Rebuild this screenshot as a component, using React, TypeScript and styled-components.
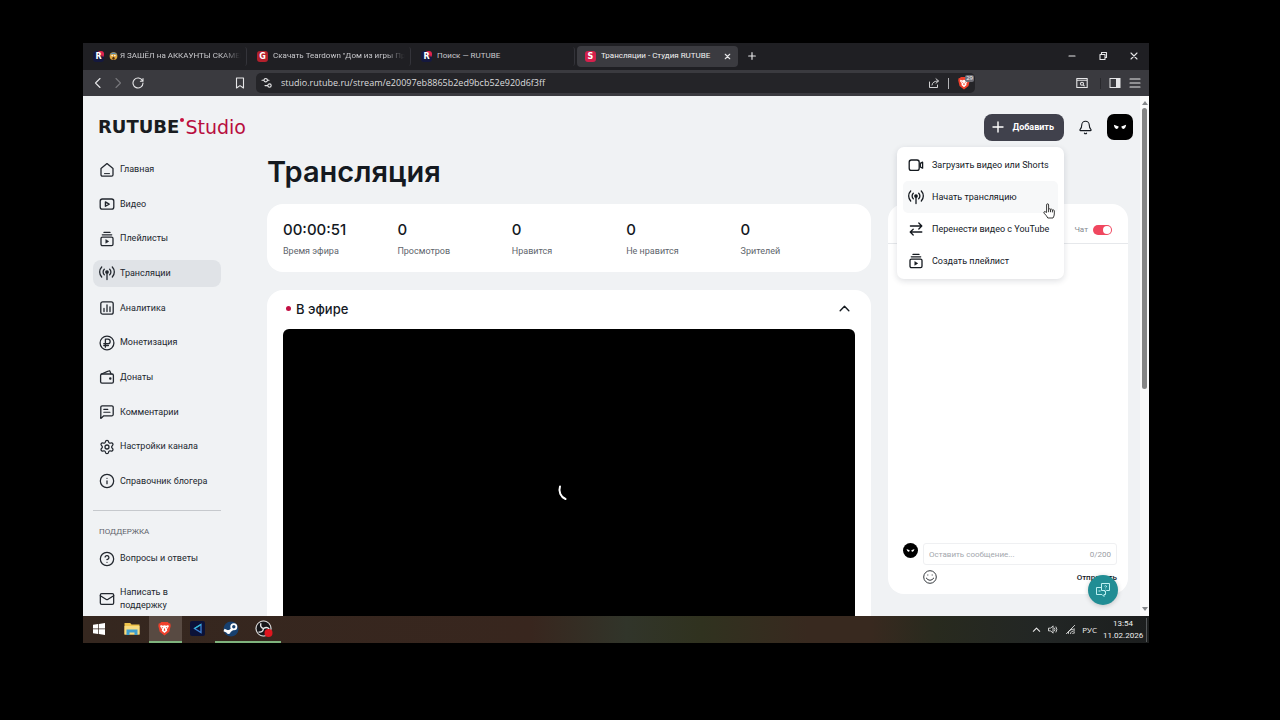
import React from "react";
import styled, { createGlobalStyle } from "styled-components";
import { Bell, Info, CircleHelp, Mail, Settings } from "lucide-react";

const Global = createGlobalStyle`
  *, *::before, *::after { box-sizing: border-box; }
  body { margin: 0; background: #000; }
  button, input { font: inherit; color: inherit; }
  button { border: 0; padding: 0; background: none; cursor: pointer; }
  h1, h2, p, dl, dd, ul { margin: 0; padding: 0; }
  svg { display: block; flex: none; }
`;

const uiFont = `"Open Sans", "Noto Sans", sans-serif`;
const bodyFont = `Roboto, "Liberation Sans", sans-serif`;
const wideFont = `Inter, "Liberation Sans", sans-serif`;

const Screen = styled.div`
  display: flex;
  height: 100vh;
  min-height: 480px;
  padding: 43px 131px 77px 83px;
  background: #000;
`;

const Desktop = styled.div`
  flex: 1;
  min-width: 0;
  display: grid;
  grid-template-rows: 27px 26px minmax(0, 1fr) 27px;
  overflow: hidden;
  font-family: ${uiFont};
`;

/* Browser chrome */
const TabStrip = styled.div`
  display: flex;
  align-items: center;
  gap: 3px;
  padding: 0 0 1px 2px;
  background: #1f1f23;
  color: #c9c9cc;
`;

const Tab = styled.div<{ $active?: boolean }>`
  display: flex;
  align-items: center;
  gap: 5px;
  flex: 0 1 161px;
  min-width: 0;
  height: 21px;
  padding: 0 5px 0 8px;
  border-radius: 4px;
  background: ${(p) => (p.$active ? "#3b3b40" : "transparent")};
  color: ${(p) => (p.$active ? "#f2f2f2" : "#c9c9cd")};
  box-shadow: ${(p) => (p.$active ? "none" : "2px 0 0 -1px #34343a")};
`;

const TabTitle = styled.span<{ $fade?: boolean }>`
  flex: 1;
  min-width: 0;
  display: flex;
  align-items: center;
  gap: 2px;
  overflow: hidden;
  white-space: nowrap;
  font-family: ${bodyFont};
  font-size: 8px;
  line-height: 14px;
  mask-image: ${(p) => (p.$fade ? "linear-gradient(90deg, #000 85%, transparent)" : "none")};
`;

const Favicon = styled.span<{ $bg: string }>`
  flex: none;
  width: 11px;
  height: 11px;
  border-radius: 3px;
  background: ${(p) => p.$bg};
  color: #fff;
  font: 700 8px/11px "DejaVu Sans", sans-serif;
  text-align: center;
`;

const ChromeButton = styled.button<{ $dim?: boolean }>`
  display: grid;
  place-items: center;
  min-width: 12px;
  height: 20px;
  color: ${(p) => (p.$dim ? "#77777c" : "#e6e6e8")};
`;

const NewTab = styled(ChromeButton)`
  width: 22px;
`;

const WindowButtons = styled.div`
  display: flex;
  gap: 19px;
  margin-left: auto;
  padding-right: 9px;
`;

const Toolbar = styled.div`
  display: grid;
  grid-template-columns: 154px minmax(0, 1fr) 156px;
  align-items: center;
  gap: 10px;
  padding: 0 8px 0 9px;
  background: #3a3a3f;
  color: #e6e6e8;
`;

const ToolGroup = styled.div<{ $end?: boolean }>`
  display: flex;
  align-items: center;
  gap: 8px;
  justify-content: ${(p) => (p.$end ? "flex-end" : "flex-start")};

  & > :first-child {
    margin-right: ${(p) => (p.$end ? "4px" : "0")};
  }

  & > :last-child {
    margin-left: ${(p) => (p.$end ? "0" : "auto")};
  }
`;

const Address = styled.label`
  display: flex;
  align-items: center;
  gap: 8px;
  height: 20px;
  padding: 0 4px 0 5px;
  border-radius: 5px;
  background: #242428;
`;

const AddressInput = styled.input`
  flex: 1;
  min-width: 0;
  padding: 0;
  border: 0;
  outline: 0;
  background: transparent;
  color: #dcdcde;
  font-size: 9px;
  line-height: 14px;
`;

const Divider = styled.span<{ $dim?: boolean }>`
  width: 1px;
  height: 11px;
  background: ${(p) => (p.$dim ? "#29292d" : "#b5b5b8")};
`;

/* Page */
const Viewport = styled.div`
  display: grid;
  grid-template-columns: minmax(0, 1fr) 9px;
  min-height: 0;
  background: #f0f2f4;
  color: #14191f;
  font-family: ${bodyFont};
`;

const Scrollbar = styled.div`
  display: flex;
  flex-direction: column;
  align-items: center;
  justify-content: space-between;
  padding: 5px 0;
  background: #fafafa;
  color: #85878a;
`;

const Thumb = styled.span`
  width: 5px;
  flex: 0 0 55%;
  margin: 3px 0 auto;
  border-radius: 3px;
  background: #858585;
`;

const Page = styled.div`
  position: relative;
  display: grid;
  grid-template: 60px minmax(0, 1fr) / 184px minmax(0, 1fr);
  min-height: 0;
`;

const Header = styled.header`
  grid-column: 1 / -1;
  display: flex;
  align-items: center;
  justify-content: space-between;
  padding: 2px 7px 0 15px;
`;

const Logo = styled.a`
  display: flex;
  align-items: center;
  color: #191c20;
  font: 700 18px/20px "DejaVu Sans", sans-serif;
  text-decoration: none;
`;

const LogoDot = styled.span`
  width: 4px;
  height: 4px;
  margin: 0 1px 14px;
  border-radius: 50%;
  background: #c8103f;
`;

const LogoSub = styled.span`
  color: #b80e3e;
  font-size: 19px;
  font-weight: 400;
`;

const HeaderActions = styled.div`
  display: flex;
  align-items: center;
  gap: 14px;
`;

const MenuAnchor = styled.div`
  position: relative;
`;

const AddButton = styled.button`
  display: flex;
  align-items: center;
  gap: 8px;
  height: 27px;
  padding: 0 10px 0 8px;
  border-radius: 8px;
  background: #40414c;
  color: #fff;
  font-size: 9px;
  font-weight: 700;
`;

const Menu = styled.ul`
  position: absolute;
  z-index: 2;
  top: 33px;
  right: 0;
  width: 167px;
  padding: 2px 6px;
  border-radius: 7px;
  background: #fff;
  box-shadow: 0 2px 6px rgba(20, 30, 50, 0.14);
  list-style: none;
`;

const MenuItem = styled.button<{ $hover?: boolean }>`
  position: relative;
  display: flex;
  align-items: center;
  gap: 8px;
  width: 100%;
  height: 32px;
  padding: 0 5px;
  border-radius: 5px;
  background: ${(p) => (p.$hover ? "#f7f8f9" : "transparent")};
  font-size: 9px;
  white-space: nowrap;
`;

const Pointer = styled.svg`
  position: absolute;
  right: 3px;
  bottom: -6px;
`;

const IconButton = styled.button`
  display: grid;
  place-items: center;
`;

const Avatar = styled.span<{ $small?: boolean }>`
  display: grid;
  place-items: center;
  flex: none;
  width: ${(p) => (p.$small ? 15 : 26)}px;
  height: ${(p) => (p.$small ? 15 : 26)}px;
  border-radius: ${(p) => (p.$small ? "50%" : "7px")};
  background: #000;
`;

const Sidebar = styled.nav`
  padding: 0 46px 0 10px;
  overflow: hidden;
`;

const NavList = styled.ul`
  display: flex;
  flex-direction: column;
  justify-content: space-between;
  height: 339px;
  list-style: none;
`;

const NavLink = styled.a<{ $active?: boolean }>`
  display: flex;
  align-items: center;
  gap: 5px;
  min-height: 27px;
  padding: 0 6px;
  border-radius: 8px;
  background: ${(p) => (p.$active ? "#e0e3e7" : "transparent")};
  color: #22272e;
  font-size: 9px;
  line-height: 13px;
  text-decoration: none;
`;

const NavText = styled.span<{ $narrow?: boolean }>`
  max-width: ${(p) => (p.$narrow ? "60px" : "none")};
`;

const Support = styled.div`
  display: flex;
  flex-direction: column;
  gap: 13px;
  margin-top: 15px;
  border-top: 1px solid #c6c9cd;
`;

const SupportTitle = styled.h2`
  padding: 15px 6px 0;
  margin-bottom: -6px;
  color: #5d636b;
  font-size: 8px;
  font-weight: 400;
  line-height: 12px;
`;

const Content = styled.div`
  display: grid;
  grid-template-columns: minmax(0, 1fr) 240px;
  gap: 17px;
  min-height: 0;
  padding-right: 12px;
`;

const Main = styled.main`
  min-width: 0;
  overflow: hidden;
`;

const Title = styled.h1`
  height: 48px;
  font: 600 29px/32px ${wideFont};
`;

const Card = styled.section`
  margin-bottom: 18px;
  padding: 0 16px;
  border-radius: 16px;
  background: #fff;
`;

const Stats = styled.dl`
  display: grid;
  grid-template-columns: repeat(5, 1fr);
  padding: 16px 0 14px;
`;

const Stat = styled.div`
  display: flex;
  flex-direction: column-reverse;
  gap: 4px;
`;

const StatLabel = styled.dt`
  color: #60656c;
  font-size: 9px;
  line-height: 14px;
`;

const StatValue = styled.dd`
  font: 500 15px/20px ${wideFont};
`;

const LiveHeader = styled.div`
  display: flex;
  align-items: center;
  gap: 5px;
  height: 39px;
  padding: 0 4px 2px 3px;
`;

const LiveDot = styled.span`
  width: 5px;
  height: 5px;
  border-radius: 50%;
  background: #c20f43;
`;

const LiveTitle = styled.h2`
  flex: 1;
  font: 500 13px/18px ${wideFont};
`;

const Player = styled.div`
  display: grid;
  place-items: center;
  aspect-ratio: 16 / 9;
  border-radius: 6px;
  background: #000;
`;

const Chat = styled.aside`
  position: relative;
  display: flex;
  flex-direction: column;
  margin: 48px 0 22px;
  border-radius: 16px;
  background: #fff;
`;

const ChatHeader = styled.label`
  display: flex;
  align-items: center;
  justify-content: flex-end;
  gap: 5px;
  height: 40px;
  padding: 12px 16px 0;
  border-bottom: 1px solid #e6e8eb;
  color: #85898f;
  font-size: 8px;
`;

const Switch = styled.input`
  appearance: none;
  display: flex;
  justify-content: flex-end;
  width: 19px;
  height: 10px;
  margin: 0;
  padding: 1px;
  border-radius: 5px;
  background: #f0475f;

  &::before {
    content: "";
    width: 8px;
    height: 8px;
    border-radius: 50%;
    background: #fff;
  }
`;

const Composer = styled.form`
  display: grid;
  grid-template-columns: 15px minmax(0, 1fr);
  gap: 4px 5px;
  margin-top: auto;
  padding: 0 11px 9px 15px;
`;

const MessageBox = styled.label`
  display: flex;
  align-items: center;
  height: 22px;
  padding: 0 5px;
  border: 1px solid #eff0f2;
  border-radius: 3px;
  color: #9a9ea4;
  font-size: 8px;
`;

const MessageInput = styled.input`
  flex: 1;
  min-width: 0;
  padding: 0;
  border: 0;
  outline: 0;
  background: none;
  font-size: 8px;

  &::placeholder {
    color: #a3a7ad;
  }
`;

const ComposerActions = styled.div`
  grid-column: 2;
  display: flex;
  align-items: center;
  justify-content: space-between;
  height: 16px;
`;

const SendButton = styled.button`
  font-size: 8px;
  font-weight: 500;
`;

const HelpBubble = styled.button`
  position: absolute;
  right: 10px;
  bottom: -11px;
  display: grid;
  place-items: center;
  width: 30px;
  height: 30px;
  border-radius: 50%;
  background: #218d94;
  color: #bdf0f2;
  box-shadow: 0 1px 5px rgba(0, 0, 0, 0.2);
`;

/* Taskbar */
const Taskbar = styled.div`
  display: flex;
  justify-content: space-between;
  background: linear-gradient(90deg, #35271f 0%, #38261e 42%, #31352a 51%, #30321f 58%, #38291f 68%, #38291f 74%, #282a1e 80%, #222625 90%, #1c1e1e 100%);
  color: #f0f0f0;
`;

const TaskGroup = styled.div`
  display: flex;
  align-items: center;
`;

const TaskButton = styled.button<{ $running?: boolean; $active?: boolean }>`
  display: grid;
  place-items: center;
  width: 33px;
  height: 27px;
  padding-right: 2px;
  background: ${(p) => (p.$active ? "#584a42" : "transparent")};
  background-clip: padding-box;
  border-bottom: 2px solid ${(p) => (p.$running ? "#7fb37d" : "transparent")};
`;

const Tray = styled(TaskGroup)`
  gap: 6px;
  padding-right: 2px;
  font-size: 8px;
`;

const Clock = styled.time`
  width: 44px;
  padding-right: 3px;
  border-right: 1px solid #55585a;
  line-height: 12px;
  text-align: center;
  font-family: ${bodyFont};
  white-space: nowrap;
`;

const shapes: Record<string, React.ReactNode> = {
  home: <><path d="M2 6.4 8 1.6l6 4.8v6.4A1.4 1.4 0 0 1 12.600 14.200H3.400A1.4 1.4 0 0 1 2 12.800Z" /><path d="M5.500 11.600h5" strokeWidth="1" /></>,
  video: <><rect x="1.200" y="3" width="13.600" height="10.200" rx="2.200" /><path d="m6.400 5.900 3.800 2.200-3.800 2.200Z" /></>,
  playlist: <><path d="M5 1.400h6M3.300 3.800h9.400" /><rect x="2" y="6.200" width="12" height="8.400" rx="1.400" /><path d="m7 8.800 2.700 1.600L7 12Z" fill="currentColor" strokeWidth=".6" /></>,
  live: <><circle cx="8" cy="7" r="1.200" fill="currentColor" /><path d="M8 8v6.600M5.300 9.800a3.900 3.900 0 0 1 0-5.600M10.700 9.800a3.900 3.900 0 0 0 0-5.600M2.700 12a7.200 7.200 0 0 1 0-10M13.300 12a7.200 7.200 0 0 0 0-10" /></>,
  chart: <><rect x="1.800" y="1.800" width="12.400" height="12.400" rx="2" /><path d="M5 8.500v3M8 4.800v6.700M11 6.800v4.700" /></>,
  ruble: <><circle cx="8" cy="8" r="6.900" /><path d="M6.400 12.200V4.200h2.500a2.200 2.200 0 0 1 0 4.500H4.800M4.800 10.500h4.600" /></>,
  wallet: <><rect x="1.600" y="5" width="12.800" height="9.200" rx="1.400" /><path d="M2.500 5 9.700 1.900a1 1 0 0 1 1.400.6L12 5" /><circle cx="11.300" cy="9.600" r=".6" fill="currentColor" /></>,
  comment: <><path d="M1.800 14.400V3.200A1.4 1.400 0 0 1 3.200 1.800h9.600a1.400 1.400 0 0 1 1.400 1.400v7.200a1.400 1.400 0 0 1-1.400 1.400H4.800Z" /><path d="M4.800 5.400h4M4.800 8.200h6.200" strokeWidth="1.100" /></>,
  camera: <><rect x="1.200" y="3" width="10" height="10.400" rx="2.200" /><path d="M12.300 6.400 14.600 5.200v6l-2.300-1.200Z" /></>,
  swap: <path d="M2.400 5h11.400M10.800 2l3 3-3 3M13.800 11H2.400M5.200 8.200 2.200 11l3 3" />,
};

function Glyph({ name }: { name: string }) {
  return (
    <svg width="16" height="16" viewBox="0 0 16 16" fill="none" stroke="currentColor" strokeWidth="1.3" strokeLinecap="round" strokeLinejoin="round" aria-hidden="true">
      {shapes[name]}
    </svg>
  );
}

const nav = [
  ["Главная", "home"],
  ["Видео", "video"],
  ["Плейлисты", "playlist"],
  ["Трансляции", "live"],
  ["Аналитика", "chart"],
  ["Монетизация", "ruble"],
  ["Донаты", "wallet"],
  ["Комментарии", "comment"],
  ["Настройки канала", "gear"],
  ["Справочник блогера", "info"],
];

const stats = [
  ["00:00:51", "Время эфира"],
  ["0", "Просмотров"],
  ["0", "Нравится"],
  ["0", "Не нравится"],
  ["0", "Зрителей"],
];

const menu = [
  ["Загрузить видео или Shorts", "camera"],
  ["Начать трансляцию", "live"],
  ["Перенести видео с YouTube", "swap"],
  ["Создать плейлист", "playlist"],
];

function navIcon(name: string) {
  if (name === "gear") return <Settings size={16} strokeWidth={1.9} />;
  if (name === "info") return <Info size={16} strokeWidth={1.9} />;
  return <Glyph name={name} />;
}

function Face({ size }: { size: number }) {
  return (
    <svg width={size} height={size} viewBox="0 0 16 16" fill="#fff" aria-hidden="true">
      <path d="M1 5.500 6.500 7.500Q6.300 10.300 4 10.200 1.700 9.800 1 5.500ZM15 5.500 9.500 7.500Q9.700 10.300 12 10.200 14.300 9.800 15 5.500Z" />
    </svg>
  );
}

function Lion({ size }: { size: number }) {
  return (
    <svg width={size} height={size} viewBox="0 0 16 16" aria-hidden="true">
      <path d="M4.500 1h7l1.200 1.400 1.500.2.400 2.600-1.500 6.300L8 15.400l-5.100-3.900L1.400 5.200l.4-2.600 1.500-.2Z" fill="#f0402c" />
      <path d="M4 4.200 6.200 5 8 4.400 9.800 5 12 4.200l.6 1.600-2 3 .3 1.500L8 12.800l-2.900-2.500.3-1.500-2-3Z" fill="#fff" />
      <path d="m4.600 6.200 2 .6-.4 1.300ZM11.400 6.200l-2 .6.400 1.300ZM8 7.200l.9 2.600L8 10.600l-.9-.8Z" fill="#f0402c" />
    </svg>
  );
}

const ShieldWrap = styled.span`
  position: relative;
  display: block;
`;

const ShieldCount = styled.span`
  position: absolute;
  top: -1px;
  right: -3px;
  padding: 0 1px;
  border-radius: 2px;
  background: #6d6d75;
  color: #fff;
  font-size: 6px;
  line-height: 7px;
`;

function Line({ d, size = 12, width = 1.1 }: { d: string; size?: number; width?: number }) {
  return (
    <svg width={size} height={size} viewBox="0 0 12 12" fill="none" stroke="currentColor" strokeWidth={width} strokeLinecap="round" strokeLinejoin="round" aria-hidden="true">
      <path d={d} />
    </svg>
  );
}

const rutubeIcon = "radial-gradient(circle at 90% 10%, #e0234e 0 22%, #14183f 38%)";

function BrowserChrome() {
  return (
    <>
      <TabStrip>
        <Tab>
          <Favicon $bg={rutubeIcon}>R</Favicon>
          <TabTitle $fade>
            <svg width="9" height="9" viewBox="0 0 10 10" aria-hidden="true">
              <circle cx="5" cy="4.500" r="4.300" fill="#e0a63a" />
              <path d="M.8 3.200Q5-2 9.200 3.200Q5 1.500.8 3.200Z" fill="#4b86b8" />
              <circle cx="3.500" cy="4" r=".9" fill="#fff" /><circle cx="6.500" cy="4" r=".9" fill="#fff" />
              <ellipse cx="5" cy="7" rx="1.300" ry="1.700" fill="#4a2b14" />
            </svg>
            Я ЗАШЁЛ на АККАУНТЫ СКАМЕР
          </TabTitle>
        </Tab>
        <Tab>
          <Favicon $bg="#b3202c">G</Favicon>
          <TabTitle $fade>Скачать Teardown "Дом из игры Пр</TabTitle>
        </Tab>
        <Tab>
          <Favicon $bg={rutubeIcon}>R</Favicon>
          <TabTitle>Поиск — RUTUBE</TabTitle>
        </Tab>
        <Tab $active>
          <Favicon $bg="#d5204c">S</Favicon>
          <TabTitle>Трансляции - Студия RUTUBE</TabTitle>
          <ChromeButton aria-label="Закрыть вкладку"><Line d="m3 3 6 6M9 3 3 9" size={9} width={1.5} /></ChromeButton>
        </Tab>
        <NewTab aria-label="Новая вкладка"><Line d="M6 2v8M2 6h8" size={10} width={1.4} /></NewTab>
        <WindowButtons>
          <ChromeButton aria-label="Свернуть"><Line d="M3 6h6" /></ChromeButton>
          <ChromeButton aria-label="Развернуть"><Line d="M3 4.500h5v5H3ZM4.500 4.500v-2h5v5H8" /></ChromeButton>
          <ChromeButton aria-label="Закрыть"><Line d="m3 3 6 6M9 3 3 9" /></ChromeButton>
        </WindowButtons>
      </TabStrip>
      <Toolbar>
        <ToolGroup>
          <ChromeButton aria-label="Назад"><Line d="M8 1.500 3.500 6 8 10.500" /></ChromeButton>
          <ChromeButton aria-label="Вперёд" $dim disabled><Line d="M4 1.500 8.500 6 4 10.500" /></ChromeButton>
          <ChromeButton aria-label="Обновить"><Line d="M10.500 3.800A5 5 0 1 0 11 6M11 1.600v2.600H8.400" /></ChromeButton>
          <ChromeButton aria-label="Закладка"><Line d="M2.500 1h7v10L6 8.600 2.500 11Z" /></ChromeButton>
        </ToolGroup>
        <Address>
          <Line d="M1 3.200h2M6.500 3.200H8M3 3.200a1.700 1.700 0 1 0 3.400 0a1.700 1.700 0 1 0-3.400 0M4 8.600h2.600M6.800 8.600a1.700 1.700 0 1 0 3.400 0a1.700 1.700 0 1 0-3.400 0" />
          <AddressInput aria-label="Адрес" defaultValue="studio.rutube.ru/stream/e20097eb8865b2ed9bcb52e920d6f3ff" />
          <ChromeButton aria-label="Поделиться"><Line d="M1.500 5v5.500h8V8M4 8q.5-4 6-4M8 1.800 10.600 4 8 6.200" width={0.9} /></ChromeButton>
          <Divider />
          <ChromeButton aria-label="Brave Shields">
            <ShieldWrap><Lion size={14} /><ShieldCount>29</ShieldCount></ShieldWrap>
          </ChromeButton>
        </Address>
        <ToolGroup $end>
          <ChromeButton aria-label="Поиск вкладок"><Line d="M.8 1.500h10.400v9H.8ZM.8 3.300h10.400M4.500 6.700a1.500 1.500 0 1 0 3 0a1.500 1.500 0 1 0-3 0M7.200 7.800l1 1" /></ChromeButton>
          <Divider $dim />
          <ChromeButton aria-label="Боковая панель">
            <svg width="12" height="12" viewBox="0 0 12 12"><rect x="1" y="1.500" width="10" height="9" fill="none" stroke="currentColor" /><path d="M7 2h4v8H7Z" fill="currentColor" /></svg>
          </ChromeButton>
          <ChromeButton aria-label="Меню"><Line d="M1 2h10M1 6h10M1 10h10" /></ChromeButton>
        </ToolGroup>
      </Toolbar>
    </>
  );
}

function AddMenu() {
  return (
    <MenuAnchor>
      <AddButton aria-haspopup="menu" aria-expanded="true">
        <Line d="M6 1v10M1 6h10" size={12} width={1.4} />
        Добавить
      </AddButton>
      <Menu>
        {menu.map(([label, icon], i) => (
          <li key={label}>
            <MenuItem $hover={i === 1}>
              <Glyph name={icon} />
              {label}
              {i === 1 && (
                <Pointer width="12" height="16" viewBox="0 0 12 16" fill="#fff" stroke="#222" strokeWidth=".9" strokeLinejoin="round">
                  <path d="M3.600 9.500V2Q3.600.8 4.600.8T5.600 2v4.300Q6 5.300 7.500 6.200 8.300 5.600 9.300 6.900 10.900 6.300 11.300 7.800V11q0 2-1.300 4H4.800Q3.900 13 1.100 10.200.4 8.700 1.600 8.600 2.600 8.700 3.600 9.500ZM5.600 6.200v3M7.500 6.400v2.800M9.400 7v2.400" />
                </Pointer>
              )}
            </MenuItem>
          </li>
        ))}
      </Menu>
    </MenuAnchor>
  );
}

function ChatPanel() {
  return (
    <Chat>
      <ChatHeader>
        Чат
        <Switch type="checkbox" role="switch" defaultChecked />
      </ChatHeader>
      <Composer>
        <Avatar $small><Face size={9} /></Avatar>
        <MessageBox>
          <MessageInput placeholder="Оставить сообщение..." aria-label="Сообщение" />
          0/200
        </MessageBox>
        <ComposerActions>
          <IconButton type="button" aria-label="Эмодзи">
            <svg width="14" height="14" viewBox="0 0 14 14" fill="none" stroke="#33373c" strokeWidth="1">
              <circle cx="7" cy="7" r="6.300" />
              <path d="M3 7.800q4 5 8 0" />
              <path d="M4.800 4.500v1M9.200 4.500v1" />
            </svg>
          </IconButton>
          <SendButton type="button">Отправить</SendButton>
        </ComposerActions>
      </Composer>
      <HelpBubble aria-label="Помощь">
        <svg width="16" height="16" viewBox="0 0 16 16" fill="none" stroke="currentColor" strokeWidth="1">
          <path d="M6.500 1.500h8v7h-3l-1.500 1.500V8.500H6.500Z" />
          <path d="M6.500 5.500h-5v7h5.500l2 2v-2h1.500V9.800" />
          <path d="M9.500 4.200q1-1 2 0 .3.800-1 1.500M10.500 6.800v.4M3.500 9h2" />
        </svg>
      </HelpBubble>
    </Chat>
  );
}

function WindowsTaskbar() {
  return (
    <Taskbar>
      <TaskGroup>
        <TaskButton aria-label="Пуск">
          <svg width="12" height="12" viewBox="0 0 12 12" fill="#fff"><path d="M0 1.700 5.200 1v4.600H0ZM5.900.9 12 0v5.600H5.900ZM0 6.300h5.200V11L0 10.300ZM5.900 6.300H12V12l-6.100-.9Z" /></svg>
        </TaskButton>
        <TaskButton aria-label="Проводник">
          <svg width="16" height="14" viewBox="0 0 16 14"><path d="M.5 1h5.700l1.300 1.500h8V12.500H.5Z" fill="#efc44b" /><path d="M.5 4h15v8.500H.5Z" fill="#f8dc80" /><path d="M2.500 13V7.500h11V13h-3v-2.500h-5V13Z" fill="#3f9fcf" /></svg>
        </TaskButton>
        <TaskButton aria-label="Brave" $running $active><Lion size={15} /></TaskButton>
        <TaskButton aria-label="Редактор">
          <svg width="15" height="15" viewBox="0 0 15 15"><rect width="15" height="15" rx="2" fill="#0b1238" /><path d="M11 3.500v8L4.500 7.500Z" fill="none" stroke="#3f7fd0" strokeWidth="1.300" /><path d="M11 3.500 4.500 7.500" stroke="#2ec3d6" strokeWidth="1.300" /></svg>
        </TaskButton>
        <TaskButton aria-label="Steam" $running>
          <svg width="16" height="16" viewBox="0 0 16 16"><circle cx="8" cy="8" r="7.500" fill="#17406f" /><path d="M1 9 5.500 11 9.500 8" stroke="#fff" strokeWidth="2.600" fill="none" /><circle cx="10.800" cy="5.800" r="2.600" fill="#17406f" stroke="#fff" strokeWidth="1.800" /><circle cx="5.500" cy="11" r="2" fill="#fff" /></svg>
        </TaskButton>
        <TaskButton aria-label="OBS Studio" $running>
          <svg width="18" height="18" viewBox="0 0 18 18"><circle cx="8.500" cy="8.500" r="7.600" fill="#d8d8d8" stroke="#e8e8e8" /><circle cx="8.500" cy="8.500" r="6.900" fill="#17171a" /><path d="M8.500 8.500Q4.500 7 6 3.200M8.500 8.500Q7.800 12.800 3.600 12M8.500 8.500Q12 6 14.300 9.200" fill="none" stroke="#e8e8e8" strokeWidth="1.400" /><circle cx="13.500" cy="13" r="4" fill="#e0161e" /></svg>
        </TaskButton>
      </TaskGroup>
      <Tray>
        <Line d="M2.500 8 6 4.500 9.500 8" size={11} />
        <Line d="M1 4.500h2L5.500 2v8L3 7.500H1ZM7.200 4.500q1 1.500 0 3M8.800 3.200q2 2.800 0 5.600" size={11} width={0.9} />
        <Line d="M1.500 10.500 10.500 1.500M3.500 10.500q0-5 7-5M6 10.500q0-3 4.500-3M8.200 10.500q0-1 2.300-1" size={11} width={0.9} />
        <span>РУС</span>
        <Clock>13:54<br />11.02.2026</Clock>
      </Tray>
    </Taskbar>
  );
}

export default function App() {
  return (
    <Screen>
      <Global />
      <Desktop>
        <BrowserChrome />
        <Viewport>
          <Page>
            <Header>
              <Logo href="#">RUTUBE<LogoDot /><LogoSub>Studio</LogoSub></Logo>
              <HeaderActions>
                <AddMenu />
                <IconButton aria-label="Уведомления"><Bell size={15} strokeWidth={1.8} /></IconButton>
                <IconButton aria-label="Профиль"><Avatar><Face size={14} /></Avatar></IconButton>
              </HeaderActions>
            </Header>
            <Sidebar>
              <NavList>
                {nav.map(([label, icon]) => (
                  <li key={label}>
                    <NavLink href="#" $active={icon === "live"}>{navIcon(icon)}<NavText>{label}</NavText></NavLink>
                  </li>
                ))}
              </NavList>
              <Support>
                <SupportTitle>ПОДДЕРЖКА</SupportTitle>
                <NavLink href="#"><CircleHelp size={16} strokeWidth={1.9} /><NavText>Вопросы и ответы</NavText></NavLink>
                <NavLink href="#"><Mail size={16} strokeWidth={1.9} /><NavText $narrow>Написать в поддержку</NavText></NavLink>
              </Support>
            </Sidebar>
            <Content>
              <Main>
                <Title>Трансляция</Title>
                <Card>
                  <Stats>
                    {stats.map(([value, label]) => (
                      <Stat key={label}>
                        <StatLabel>{label}</StatLabel>
                        <StatValue>{value}</StatValue>
                      </Stat>
                    ))}
                  </Stats>
                </Card>
                <Card>
                  <LiveHeader>
                    <LiveDot />
                    <LiveTitle>В эфире</LiveTitle>
                    <IconButton aria-label="Свернуть"><Line d="M2 8 6 4l4 4" size={13} width={1.3} /></IconButton>
                  </LiveHeader>
                  <Player>
                    <svg width="24" height="24" viewBox="0 0 24 24" fill="none" stroke="#fff" strokeWidth="2" strokeLinecap="round"><path d="M3 8.500A10 10 0 0 0 8.500 21" /></svg>
                  </Player>
                </Card>
              </Main>
              <ChatPanel />
            </Content>
          </Page>
          <Scrollbar>
            <svg width="6" height="4" viewBox="0 0 6 4" fill="currentColor"><path d="M3 0 6 4H0Z" /></svg>
            <Thumb />
            <svg width="6" height="4" viewBox="0 0 6 4" fill="currentColor"><path d="M3 4 0 0h6Z" /></svg>
          </Scrollbar>
        </Viewport>
        <WindowsTaskbar />
      </Desktop>
    </Screen>
  );
}
